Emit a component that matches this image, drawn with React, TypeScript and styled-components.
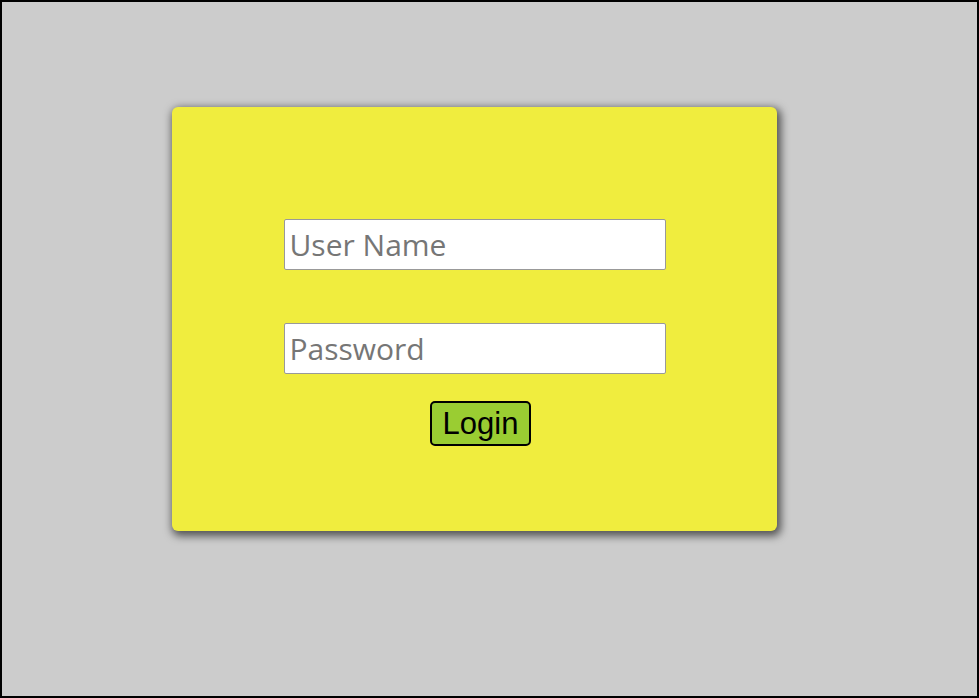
import { createGlobalStyle } from 'styled-components'
import styled from 'styled-components'

const GlobalStyle = createGlobalStyle`
  html, body {
    margin: 0;
    padding: 0;
  }
  * {
    box-sizing: border-box;
  }
`

export default function App() {
  return (
    <>
      <GlobalStyle />
      <Page>
        <Card>
          <Form onSubmit={(e) => e.preventDefault()}>
            <Input type="text" placeholder="User Name" />
            <Input type="password" placeholder="Password" />
            <LoginButton type="submit">Login</LoginButton>
          </Form>
        </Card>
      </Page>
    </>
  )
}

const Page = styled.main`
  width: 979px;
  height: 698px;
  border: 2px solid #000;
  background-color: #cccccc;
  padding: 105px 0 0 170px;
`

const Card = styled.div`
  width: 605px;
  height: 424px;
  background-color: #f0ed3e;
  border-radius: 6px;
  box-shadow: 2px 3px 9px 2px rgba(0, 0, 0, 0.6);
  padding-top: 112px;
`

const Form = styled.form`
  display: flex;
  flex-direction: column;
  align-items: center;
`

const Input = styled.input`
  width: 382px;
  height: 51px;
  padding: 0 5px;
  margin-bottom: 53px;
  border: 1px solid #999;
  border-radius: 2px;
  background-color: #fff;
  font-family: 'Open Sans', sans-serif;
  font-size: 30px;
  color: #333;

  &:nth-of-type(2) {
    margin-bottom: 27px;
  }

  &::placeholder {
    color: #767676;
  }
`

const LoginButton = styled.button`
  margin-left: 12px;
  height: 45px;
  padding: 0 11px;
  background-color: #9acd32;
  border: 2px solid #000;
  border-radius: 5px;
  font-family: 'Liberation Sans', Arial, sans-serif;
  font-size: 31px;
  color: #000;
  cursor: pointer;
`
